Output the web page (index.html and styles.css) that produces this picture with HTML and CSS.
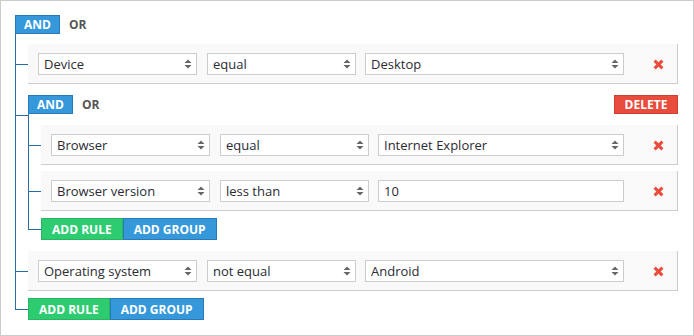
FILE: index.html
```html
<!DOCTYPE html>
<html lang="en">

<head>
    <meta charset="UTF-8">
    <meta name="viewport" content="width=device-width, initial-scale=1.0">
    <title>Query builder</title>
    <link rel="stylesheet" href="styles.css">
</head>

<body>
    <div class="builder">
        <div class="group">
            <div class="group-header">
                <button class="btn-cond active">AND</button>
                <button class="btn-cond">OR</button>
            </div>
            <div class="group-body">
                <div class="rule">
                    <select class="field">
                        <option>Device</option>
                    </select>
                    <select class="operator">
                        <option>equal</option>
                    </select>
                    <select class="value">
                        <option>Desktop</option>
                    </select>
                    <div class="rule-delete"><span class="icon-x"></span></div>
                </div>

                <div class="group nested">
                    <div class="group-header">
                        <button class="btn-cond active">AND</button>
                        <button class="btn-cond">OR</button>
                        <button class="btn-delete">Delete</button>
                    </div>
                    <div class="group-body">
                        <div class="rule">
                            <select class="field">
                                <option>Browser</option>
                            </select>
                            <select class="operator">
                                <option>equal</option>
                            </select>
                            <select class="value">
                                <option>Internet Explorer</option>
                            </select>
                            <div class="rule-delete"><span class="icon-x"></span></div>
                        </div>
                        <div class="rule">
                            <select class="field">
                                <option>Browser version</option>
                            </select>
                            <select class="operator">
                                <option>less than</option>
                            </select>
                            <input class="value" type="text" value="10">
                            <div class="rule-delete"><span class="icon-x"></span></div>
                        </div>
                        <div class="actions">
                            <button class="btn-add-rule">Add rule</button>
                            <button class="btn-add-group">Add group</button>
                        </div>
                    </div>
                </div>

                <div class="rule">
                    <select class="field">
                        <option>Operating system</option>
                    </select>
                    <select class="operator">
                        <option>not equal</option>
                    </select>
                    <select class="value">
                        <option>Android</option>
                    </select>
                    <div class="rule-delete"><span class="icon-x"></span></div>
                </div>
                <div class="actions">
                    <button class="btn-add-rule">Add rule</button>
                    <button class="btn-add-group">Add group</button>
                </div>
            </div>
        </div>
    </div>
</body>

</html>
```

FILE: styles.css
```css
* {
    padding: 0;
    margin: 0;
    box-sizing: border-box;
    font-family: 'Open Sans', sans-serif;
}

body {
    background: #fff;
}

.builder {
    width: 694px;
    height: 336px;
    border: 1px solid #ccc;
    padding: 14px 15px 14px 14px;
}

.group-header {
    display: flex;
    align-items: center;
    height: 19px;
}

.btn-cond {
    height: 19px;
    padding: 0 8px;
    border: 1px solid transparent;
    background: none;
    color: #555;
    font-size: 12px;
    font-weight: 700;
    cursor: pointer;
}

.btn-cond.active {
    background: #3498db;
    border-color: #2a7ab8;
    color: #fff;
}

.btn-delete {
    margin-left: auto;
    height: 19px;
    width: 64px;
    border: 1px solid #d13f30;
    background: #e74c3c;
    color: #fff;
    font-size: 12px;
    font-weight: 700;
    text-transform: uppercase;
    cursor: pointer;
}

.group-body {
    position: relative;
    padding: 10px 0 0 13px;
}

.nested .group-body {
    padding-top: 11px;
}

.group-body::before {
    content: '';
    position: absolute;
    left: 0;
    top: 0;
    bottom: 11px;
    border-left: 1px solid #2d6ca2;
}

.group-body > * {
    position: relative;
}

.group-body > *::before {
    content: '';
    position: absolute;
    left: -13px;
    width: 13px;
    top: 50%;
    border-top: 1px solid #2d6ca2;
}

.group-body > .group::before {
    top: 20px;
}

.group.nested {
    margin: 11px 0;
}

.rule {
    display: flex;
    align-items: center;
    padding: 9px 0 8px 10px;
    background: #f9f9f9;
    border-right: 1px solid #ccc;
    border-bottom: 1px solid #ccc;
}

.rule + .rule {
    margin-top: 6px;
}

.rule select,
.rule input {
    height: 22px;
    border: 1px solid #ccc;
    background-color: #fff;
    font-size: 13px;
    color: #2b2b33;
    padding: 0 5px;
    appearance: none;
    -webkit-appearance: none;
    border-radius: 0;
    outline: none;
}

.rule select {
    background-image: url("data:image/svg+xml;utf8,<svg xmlns='http://www.w3.org/2000/svg' width='8' height='10'><path d='M4 0.5 L7.5 4 L0.5 4 Z M0.5 6 L7.5 6 L4 9.5 Z' fill='%23666'/></svg>");
    background-repeat: no-repeat;
    background-position: right 4px center;
}

.field {
    width: 159px;
}

.operator {
    width: 149px;
    margin-left: 10px;
}

.value {
    flex: 1;
    margin-left: 9px;
}

.rule-delete {
    width: 53px;
    display: flex;
    justify-content: flex-end;
    padding-right: 14px;
}

.icon-x {
    position: relative;
    width: 9px;
    height: 9px;
}

.icon-x::before,
.icon-x::after {
    content: '';
    position: absolute;
    left: -1px;
    top: 3px;
    width: 11px;
    height: 3px;
    background: #e74c3c;
    transform: rotate(45deg);
}

.icon-x::after {
    transform: rotate(-45deg);
}

.actions {
    display: flex;
    margin-top: 7px;
}

.actions button {
    height: 22px;
    padding: 0 10px;
    color: #fff;
    font-size: 12px;
    font-weight: 700;
    text-transform: uppercase;
    cursor: pointer;
}

.btn-add-rule {
    background: #2ecc71;
    border: 1px solid #28b463;
}

.btn-add-group {
    background: #3498db;
    border: 1px solid #2a7ab8;
}
```
